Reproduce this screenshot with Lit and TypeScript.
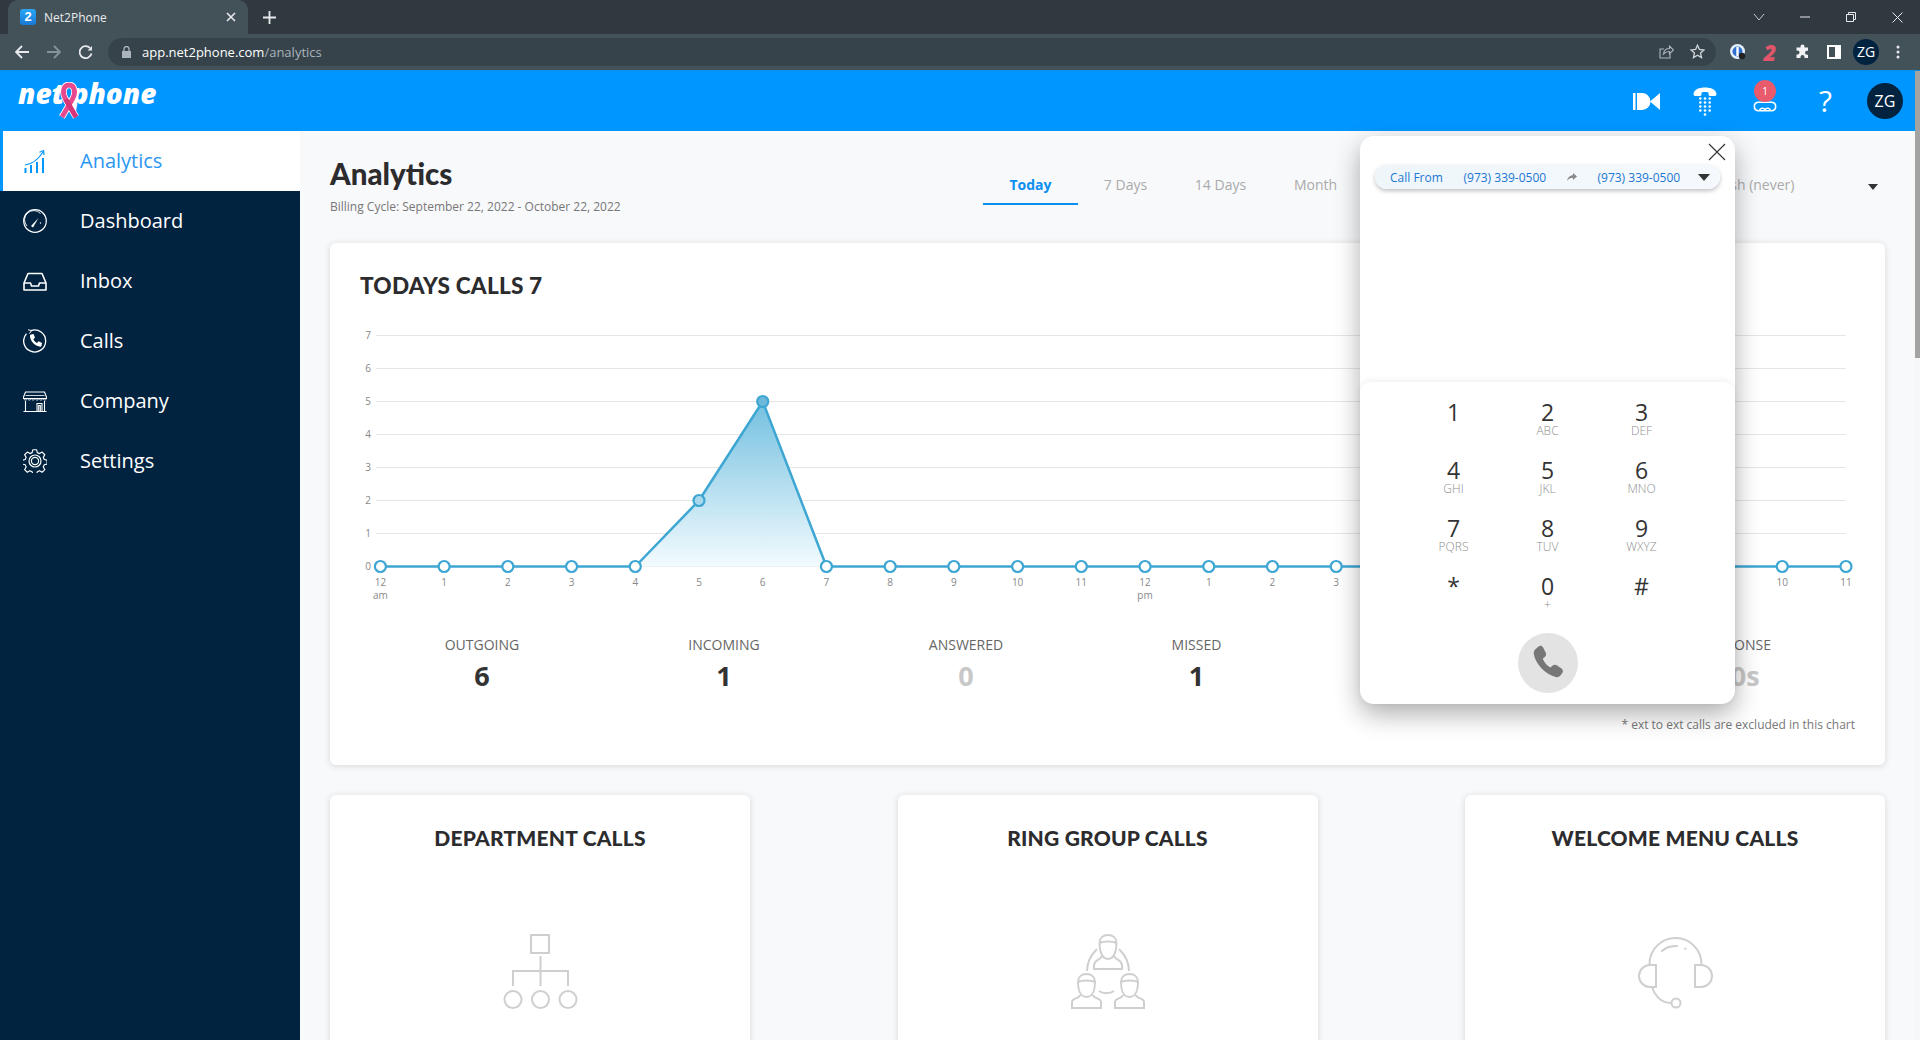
import { LitElement, html, css, svg } from "lit";
import { customElement } from "lit/decorators.js";

const BLUE = "#3ea6d3";
const yv = (v: number) => 266.5 - v * 33;
const xv = (i: number) => 50.4 + i * 63.72;
const VALUES: Record<number, number> = { 5: 2, 6: 5 };
const LABELS = ["12","1","2","3","4","5","6","7","8","9","10","11","12","1","2","3","4","5","6","7","8","9","10","11"];
const KEYS = [["1",""],["2","ABC"],["3","DEF"],["4","GHI"],["5","JKL"],["6","MNO"],["7","PQRS"],["8","TUV"],["9","WXYZ"],["*",""],["0","+"],["#",""]];
const STATS = [
  { l: "OUTGOING", v: "6", w: 242 },
  { l: "INCOMING", v: "1", w: 242 },
  { l: "ANSWERED", v: "0", w: 242, z: true },
  { l: "MISSED", v: "1", w: 219 },
];
const NAV = ["Analytics", "Dashboard", "Inbox", "Calls", "Company", "Settings"];

const NAV_ICONS: Record<string, unknown> = {
  Analytics: html`<svg viewBox="0 0 24 24" width="24" height="24" fill="none" stroke="#0096ff" stroke-width="1.6"><path d="M2.5 24v-5M8 24v-8M14 24v-11M20 24V9" stroke-width="2"/><path d="M2 16C9 15 15 11 20 3" stroke-width="1.2"/><path d="M16.5 3.2 20.6 1.5 21 6" stroke-width="1.2"/></svg>`,
  Dashboard: html`<svg viewBox="0 0 24 24" width="24" height="24" fill="none" stroke="#fff" stroke-width="1.2"><circle cx="12" cy="12" r="11.3"/><path d="M4 17A9 9 0 0 1 17.5 4.5" stroke-width=".9"/><path d="M8 17 15.5 9l-5.5 9.5z" fill="#fff" stroke="none"/><circle cx="17.5" cy="14" r=".7" fill="#fff" stroke="none"/></svg>`,
  Inbox: html`<svg viewBox="0 0 24 19" width="24" height="19" fill="none" stroke="#fff" stroke-width="1.6" stroke-linejoin="round"><path d="M1 11 5 1.5h14L23 11v7H1z"/><path d="M1 11h6.5l1 3h7l1-3H23"/></svg>`,
  Calls: html`<svg viewBox="0 0 24 24" width="24" height="24" fill="none" stroke="#fff" stroke-width="1.3"><path d="M8 1.6A11 11 0 1 1 3.5 4.6"/><path d="M5 .8 8.6 1.6 6.4 4.6" stroke-width="1"/><path d="M8 5.5 10.5 5l1.5 3.6-1.6 1.6c.8 1.7 2 2.9 3.6 3.7l1.6-1.6 3.4 1.6-.4 2.5c-.3 1-1.2 1.4-2.2 1.2C11.500 16.500 7.600 12.500 7 7.500 6.900 6.500 7.200 5.800 8 5.500z" fill="#fff" stroke="none"/></svg>`,
  Company: html`<svg viewBox="0 0 24 21" width="24" height="21" fill="none" stroke="#fff" stroke-width="1.1"><path d="M2.500 1h19L23.500 6v1.500H.5V6z"/><path d="M.5 7.500c1 2 3 2 4 0 1 2 3 2 3.800 0 1 2 3 2 3.800 0 1 2 3 2 3.800 0 1 2 3 2 3.800 0 1 2 3 2 4 0" stroke-width=".9"/><path d="M2.500 10v10M21.500 10v10M.5 20.500h23"/><path d="M14 12.500h5v8h-5zM15.700 14.500h1.600v6h-1.600z"/><path d="M2.500 4.500h19" stroke-width=".8"/></svg>`,
  Settings: html`<svg viewBox="0 0 24 24" width="24" height="24" fill="none" stroke="#fff" stroke-width="1.2" stroke-linejoin="round"><path d="M10 .8h4l.7 3 2.300 1 2.700-1.600 2.800 2.800-1.600 2.700 1 2.300 3 .7v.6 3.400l-3 .7-1 2.300 1.600 2.700-2.800 2.800-2.700-1.600-2.300 1-.7 3h-4l-.7-3-2.300-1-2.700 1.600-2.800-2.800 1.600-2.700-1-2.300-3-.7v-4l3-.7 1-2.300L1.500 6l2.800-2.800L7 4.800l2.300-1z" transform="translate(.2 0) scale(.96)"/><circle cx="12" cy="12" r="6"/><circle cx="12" cy="12" r="3.600"/></svg>`,
};

@customElement("app-root")
export class AppRoot extends LitElement {
  static styles = css`
    :host { display: block; position: relative; width: 1920px; height: 1040px; overflow: hidden; background: #f8f9fb; font-family: "Open Sans", "Liberation Sans", sans-serif; color: #333; }
    * { box-sizing: border-box; }
    svg { display: block; flex: none; }

    .tabstrip { height: 34px; background: #2f393f; display: flex; align-items: flex-end; padding-left: 8px; color: #e8eaed; }
    .tab { width: 240px; height: 34px; background: #435259; border-radius: 10px 10px 0 0; display: flex; align-items: center; padding: 0 12px; font-size: 12px; gap: 8px; }
    .fav { width: 16px; height: 16px; border-radius: 3px; background: linear-gradient(#2aa6f5, #1779d8); color: #fff; font: 700 13px/16px "Liberation Sans", sans-serif; text-align: center; }
    .tab .title { flex: 1; }
    .plus { margin-left: 15px; margin-bottom: 10px; }
    .winctl { margin-left: auto; display: flex; align-items: center; height: 34px; }
    .winctl div { width: 46px; display: flex; justify-content: center; }

    .toolbar { height: 37px; background: #435259; border-bottom: 1px solid #0e8fe6; display: flex; align-items: center; padding: 0 0 1px 15px; }
    .nav-arrows { display: flex; gap: 18px; width: 93px; }
    .omni { width: 1608px; height: 28px; border-radius: 14px; background: #36434b; display: flex; align-items: center; padding: 0 11px 0 14px; font-size: 13px; color: #fff; }
    .omni .lock { margin-right: 11px; }
    .omni .dim { color: #a9b4ba; }
    .omni .acts { margin-left: auto; display: flex; gap: 16px; align-items: center; }
    .exts { display: flex; align-items: center; margin-left: 6px; width: 192px; }
    .ext { width: 32px; display: flex; justify-content: center; align-items: center; }
    .red2 { font: italic 800 22px/24px "Open Sans", sans-serif; color: #e2566b; }
    .mini-av { width: 26px; height: 26px; border-radius: 50%; background: #012340; color: #fff; font-size: 14px; line-height: 26px; text-align: center; }

    .frame { display: flex; height: 969px; }
    .page { flex: 1; min-width: 0; display: flex; flex-direction: column; }
    .scroll { width: 5px; background: #f6f7f9; }
    .thumb { height: 287px; background: #a3a3a3; }

    .topbar { height: 60px; flex: none; background: #0096ff; display: flex; align-items: center; color: #fff; }
    .logo { display: flex; align-items: flex-start; align-self: flex-start; padding: 4px 0 0 18px; font: italic 800 28px/36px "Open Sans", sans-serif; }
    .logo svg { position: relative; margin: 7px -10px 0 -7px; }
    .top-icons { margin-left: auto; display: flex; align-items: center; }
    .ticon { width: 61px; height: 60px; display: flex; align-items: center; justify-content: center; position: relative; }
    .ticon.video svg { margin-left: 8px; }
    .ticon.dial svg { margin-left: 2px; }
    .badge { position: absolute; left: 20px; top: 9px; width: 22px; height: 22px; border-radius: 50%; background: #e85a6c; font-size: 10px; line-height: 22px; text-align: center; color: #fff; }
    .q { font-size: 30px; line-height: 30px; font-weight: 400; }
    .avatar { width: 36px; height: 36px; border-radius: 50%; background: #012340; font-size: 16px; line-height: 36px; text-align: center; margin: 0 12px 0 11px; }

    .body { flex: 1; display: flex; min-height: 0; }
    .side { width: 300px; flex: none; background: #012340; }
    .item { height: 60px; display: flex; align-items: center; color: #fff; font-size: 20px; padding-left: 23px; }
    .item .label { margin-top: -2px; }
    .item .ic { width: 57px; display: flex; }
    .item.active { background: #fff; color: #2b97f2; border-left: 3px solid #0096ff; padding-left: 20px; }

    .main { flex: 1; min-width: 0; padding: 0 30px; overflow: hidden; }
    .head { height: 112px; display: flex; }
    .heading { width: 653px; padding-top: 26px; }
    h1 { margin: 0; font: 900 29.5px/34px "Lato", sans-serif; color: #2c2c2e; }
    .billing { margin-top: 8px; font-size: 12px; line-height: 16px; color: #777; }
    .tabs { display: flex; margin-top: 36px; height: 38px; }
    .t { width: 95px; text-align: center; font-size: 14px; line-height: 20px; padding: 8px 0; color: #aaa; border-bottom: 2px solid transparent; }
    .t.on { color: #0a8ef0; font-weight: 700; border-color: #0a8ef0; }
    .refresh { margin-left: auto; width: 245px; margin-top: 44px; padding-left: 23px; display: flex; justify-content: space-between; font-size: 14px; line-height: 20px; color: #aaa; }
    .caret { width: 0; height: 0; border-left: 5px solid transparent; border-right: 5px solid transparent; border-top: 6px solid #333; margin: 9px 7px 0 0; }

    .card { background: #fff; border-radius: 6px; box-shadow: 0 1px 7px rgba(0,0,0,.14); }
    .today { height: 522px; padding-top: 30px; }
    h2 { margin: 0; font: 900 21px/26px "Lato", sans-serif; color: #2c2c2e; letter-spacing: .2px; }
    .today h2 { padding-left: 30px; font-size: 22.6px; }
    .today .plot { margin-top: 1px; }
    .chart-t { font: 10px "Open Sans", sans-serif; fill: #888; }
    .stats { display: flex; margin-top: 31px; padding-left: 31px; }
    .stat { text-align: center; flex: none; }
    .stat .l { font-size: 14px; line-height: 20px; color: #666; }
    .stat .v { margin-top: 3px; font-size: 27px; line-height: 36px; font-weight: 700; color: #333; }
    .stat .v.z { color: #c8c8c8; }
    .stat.last { margin-left: auto; margin-right: 114px; }
    .note { margin-top: 23px; padding-right: 30px; text-align: right; font-size: 12px; line-height: 16px; color: #777; }

    .row { display: flex; justify-content: space-between; margin-top: 30px; }
    .small { width: 420px; height: 320px; padding-top: 30px; text-align: center; }
    .small svg { margin: 78px auto 0; }

    .dialer { position: absolute; left: 1360px; top: 136px; width: 375px; height: 568px; background: #fff; border-radius: 14px; box-shadow: 0 10px 26px rgba(0,0,0,.32); display: flex; flex-direction: column; }
    .close { position: absolute; right: 9px; top: 7px; }
    .pill { margin: 29px 15px 0; height: 24px; border-radius: 12px; background: linear-gradient(90deg, #eef6fb, #f5f9fd); box-shadow: 0 2px 4px rgba(0,0,0,.25); display: flex; align-items: center; padding: 0 10px 0 15px; font-size: 12px; color: #1c76d2; }
    .pill .from { width: 73.500px; }
    .pill .num { width: 83px; }
    .pill .fwd { width: 51px; display: flex; justify-content: center; }
    .pill .tri { margin-left: auto; width: 0; height: 0; border-left: 6px solid transparent; border-right: 6px solid transparent; border-top: 7px solid #333; }
    .pad { margin-top: auto; height: 322px; border-radius: 12px; box-shadow: 0 -2px 6px rgba(0,0,0,.06); padding-top: 19px; }
    .keys { display: grid; grid-template-columns: repeat(3, 94px); grid-auto-rows: 58px; justify-content: center; }
    .key { text-align: center; }
    .key .d { font-size: 23px; line-height: 23px; color: #333; }
    .key .a { font-size: 12px; line-height: 14px; color: #8f8f8f; font-weight: 300; }
    .call { width: 60px; height: 60px; margin: 0 auto; border-radius: 50%; background: #e3e3e3; display: flex; align-items: center; justify-content: center; }
  `;

  private chart() {
    const pts = LABELS.map((_, i) => ({ x: xv(i), y: yv(VALUES[i] ?? 0), i }));
    return html`<svg class="plot" width="1555" height="304" viewBox="0 0 1555 304">
      <defs><linearGradient id="area" x1="0" y1="0" x2="0" y2="1"><stop offset="0" stop-color="#74c0e0"/><stop offset="1" stop-color="#f2fbfe"/></linearGradient></defs>
      ${[0,1,2,3,4,5,6,7].map(v => svg`
        <line x1="46" x2="1516" y1=${yv(v)} y2=${yv(v)} stroke="#e6e6e6" stroke-width="1"/>
        <text class="chart-t" x="38" y=${yv(v) + 3.500} text-anchor="middle">${v}</text>`)}
      <polygon points="${xv(4)},${yv(0)} ${xv(5)},${yv(2)} ${xv(6)},${yv(5)} ${xv(7)},${yv(0)}" fill="url(#area)"/>
      <polyline points=${pts.map(p => `${p.x},${p.y}`).join(" ")} fill="none" stroke=${BLUE} stroke-width="2.500" stroke-linejoin="round"/>
      ${pts.map(p => svg`<circle cx=${p.x} cy=${p.y} r="5.500" stroke=${BLUE} stroke-width="2.200" fill=${p.i === 6 ? "#6db9dc" : p.i === 5 ? "#a9d8ec" : "#fff"}/>`)}
      ${LABELS.map((l, i) => svg`<text class="chart-t" x=${xv(i)} y="285.500" text-anchor="middle">${l}</text>`)}
      <text class="chart-t" x=${xv(0)} y="298.500" text-anchor="middle">am</text>
      <text class="chart-t" x=${xv(12)} y="298.500" text-anchor="middle">pm</text>
    </svg>`;
  }

  render() {
    return html`
      <div class="tabstrip">
        <div class="tab">
          <div class="fav">2</div><div class="title">Net2Phone</div>
          <svg width="10" height="10" viewBox="0 0 10 10" stroke="#e8eaed" stroke-width="1.600"><path d="M1 1l8 8M9 1l-8 8"/></svg>
        </div>
        <svg class="plus" width="13" height="13" viewBox="0 0 13 13" stroke="#e8eaed" stroke-width="1.800"><path d="M6.500 0v13M0 6.500h13"/></svg>
        <div class="winctl">
          <div><svg width="12" height="8" viewBox="0 0 12 8" fill="none" stroke="#c4c9cc"><path d="M1 1l5 6 5-6"/></svg></div>
          <div><svg width="10" height="2" viewBox="0 0 10 2"><path d="M0 1h10" stroke="#e8eaed"/></svg></div>
          <div><svg width="10" height="10" viewBox="0 0 10 10" fill="none" stroke="#e8eaed"><path d="M.5 2.500h7v7h-7zM2.500 2.500v-2h7v7h-2"/></svg></div>
          <div><svg width="11" height="11" viewBox="0 0 11 11" stroke="#e8eaed"><path d="M.5.500l10 10M10.500.500l-10 10"/></svg></div>
        </div>
      </div>
      <div class="toolbar">
        <div class="nav-arrows">
          <svg width="14" height="14" viewBox="0 0 14 14" fill="none" stroke="#e8eaed" stroke-width="1.800"><path d="M14 7H1.500M7 1 1 7l6 6"/></svg>
          <svg width="14" height="14" viewBox="0 0 14 14" fill="none" stroke="#84929a" stroke-width="1.800"><path d="M0 7h12.500M7 1l6 6-6 6"/></svg>
          <svg width="14" height="14" viewBox="0 0 14 14" fill="none" stroke="#e8eaed" stroke-width="1.800"><path d="M12.500 8.500A6 6 0 1 1 11 3"/><path d="M13 1v4.500H8.500z" fill="#e8eaed" stroke="none"/></svg>
        </div>
        <div class="omni">
          <svg class="lock" width="9" height="12" viewBox="0 0 9 12"><path d="M0 5h9v7H0z" fill="#aab4ba"/><path d="M2 5V3a2.500 2.500 0 0 1 5 0v2" fill="none" stroke="#aab4ba" stroke-width="1.300"/></svg>
          <span>app.net2phone.com<span class="dim">/analytics</span></span>
          <div class="acts">
            <svg width="15" height="15" viewBox="0 0 15 15" fill="none" stroke="#aeb6bb" stroke-width="1.100"><path d="M5 5H1v9h10v-4"/><path d="M4.500 10c.5-4 3.500-5.500 6-5.500V2L14.500 6l-4 4V7.500C8 7.500 6 8.500 4.500 10z"/></svg>
            <svg width="15" height="15" viewBox="0 0 15 15" fill="none" stroke="#d0d5d8" stroke-width="1.300"><path d="M7.500 1.200 9.400 5.500l4.600.5-3.500 3 1 4.600-4-2.400-4 2.400 1-4.600L1 6l4.600-.5z"/></svg>
          </div>
        </div>
        <div class="exts">
          <div class="ext"><svg width="16" height="16" viewBox="0 0 16 16"><circle cx="7.500" cy="7.500" r="7.500" fill="#e8f1fb"/><circle cx="7.500" cy="7.500" r="5" fill="#2e6fd0"/><rect x="6.300" y="3" width="2.400" height="9" fill="#fff"/><circle cx="12" cy="12" r="3.200" fill="#222"/></svg></div>
          <div class="ext red2">2</div>
          <div class="ext"><svg width="15" height="15" viewBox="0 0 15 15" fill="#f1f3f4"><path d="M5.500 2.500a2 2 0 0 1 4 0V3.500H13v3.300h-1a2 2 0 0 0 0 4h1V14H9.500v-1a2 2 0 0 0-4 0v1H1.500v-3.500h1a2 2 0 0 0 0-4h-1V3.500h4z"/></svg></div>
          <div class="ext"><svg width="14" height="14" viewBox="0 0 14 14"><path d="M0 0h14v14H0z" fill="#fff"/><path d="M2 2h6v10H2z" fill="#435259"/></svg></div>
          <div class="ext"><div class="mini-av">ZG</div></div>
          <div class="ext"><svg width="4" height="14" viewBox="0 0 4 14" fill="#e8eaed"><circle cx="2" cy="2" r="1.500"/><circle cx="2" cy="7" r="1.500"/><circle cx="2" cy="12" r="1.500"/></svg></div>
        </div>
      </div>

      <div class="frame">
        <div class="page">
          <header class="topbar">
            <div class="logo">
              <span>net</span>
              <svg width="24" height="38" viewBox="0 0 24 38" fill="none"><path d="M5 35 15.500 17C19 11 18 3 12 3S5 11 8.500 17L19 35" stroke="#fff" stroke-width="6.500"/><path d="M5 35 15.500 17C19 11 18 3 12 3S5 11 8.500 17L19 35" stroke="#e8488d" stroke-width="4.800"/><path d="M8.500 17 19 35" stroke="#d43679" stroke-width="4.800"/></svg>
              <span>phone</span>
            </div>
            <div class="top-icons">
              <div class="ticon video"><svg width="27" height="17" viewBox="0 0 27 17" fill="#fff"><path d="M0 0h2.500v17H0zM4 0h5a8.500 8.500 0 0 1 0 17H4z"/><path d="M17 8.500 27 0v17z"/></svg></div>
              <div class="ticon dial"><svg width="24" height="29" viewBox="0 0 24 29" fill="#fff"><path d="M.5 7C1 2.500 6 .500 12 .500S23 2.500 23.500 7c0 1-.5 2-2 2H17c-1 0-1.500-.8-1.500-2V5.500c-2-.6-5-.6-7 0V7C8.500 8.200 8 9 7 9H2.500C1 9 .5 8 .5 7z"/>${[0,1,2,3].map(r => [0,1,2].map(c => svg`<circle cx=${7.300 + c * 4.700} cy=${11.500 + r * 4} r="1.300"/>`))}<circle cx="12" cy="27.500" r="1.300"/></svg></div>
              <div class="ticon"><svg style="margin-top:10px" width="24" height="11" viewBox="0 0 24 11" fill="none" stroke="#fff" stroke-width="1.600"><path d="M6 9.700H5A4.300 4.300 0 0 1 5 1.200h14a4.300 4.300 0 0 1 0 8.500h-1M6 9.700h12M6.500 9.700a3 3 0 0 1 5.500-1 3 3 0 0 1 5.500 1"/></svg><div class="badge">1</div></div>
              <div class="ticon q">?</div>
              <div class="avatar">ZG</div>
            </div>
          </header>
          <div class="body">
            <nav class="side">
              ${NAV.map((n, i) => html`<div class="item ${i === 0 ? "active" : ""}"><span class="ic">${NAV_ICONS[n]}</span><span class="label">${n}</span></div>`)}
            </nav>
            <main class="main">
              <div class="head">
                <div class="heading">
                  <h1>Analytics</h1>
                  <div class="billing">Billing Cycle: September 22, 2022 - October 22, 2022</div>
                </div>
                <div class="tabs">
                  <div class="t on">Today</div><div class="t">7 Days</div><div class="t">14 Days</div><div class="t">Month</div>
                </div>
                <div class="refresh"><span>Auto-refresh (never)</span><span class="caret"></span></div>
              </div>

              <section class="card today">
                <h2>TODAYS CALLS 7</h2>
                ${this.chart()}
                <div class="stats">
                  ${STATS.map(s => html`<div class="stat" style="width:${s.w}px"><div class="l">${s.l}</div><div class="v ${s.z ? "z" : ""}">${s.v}</div></div>`)}
                  <div class="stat last"><div class="l">AVG RESPONSE</div><div class="v z">0m 0s</div></div>
                </div>
                <div class="note">* ext to ext calls are excluded in this chart</div>
              </section>

              <div class="row">
                <section class="card small">
                  <h2>DEPARTMENT CALLS</h2>
                  <svg width="80" height="80" viewBox="0 0 80 80" fill="none" stroke="#cfcfcf" stroke-width="2"><rect x="31" y="6" width="18" height="18"/><path d="M40.500 27v30M13 57V42h55v15"/><circle cx="13" cy="70.500" r="8.500"/><circle cx="40.500" cy="70.500" r="8.500"/><circle cx="68" cy="70.500" r="8.500"/></svg>
                </section>
                <section class="card small">
                  <h2>RING GROUP CALLS</h2>
                  <svg width="80" height="80" viewBox="0 0 80 80" fill="none" stroke="#cfcfcf" stroke-width="2"><path d="M31.500 14C31.500 9 35 6 40 6s8.500 3 8.500 8c0 7-2 16-8.500 16s-8.500-9-8.500-16zM31.500 14c4-2 13-2 17 0"/><path d="M34 27c-1 4-8 3-8 10v3h28v-3c0-7-7-6-8-10"/><path d="M29 20C22 27 19 34 19 42M51 20c7 7 10 14 10 22"/><path d="M31 62c4 3 11 3 15 0"/><path d="M10 53c0-5 3.500-8 8.500-8s8.500 3 8.500 8c0 7-2 15-8.500 15S10 60 10 53zM10 53c4-2 13-2 17 0M12 66c-1 4-8 3-8 7v6h29v-6c0-4-7-3-8-7"/><path d="M53 53c0-5 3.500-8 8.500-8s8.500 3 8.500 8c0 7-2 15-8.500 15S53 60 53 53zM53 53c4-2 13-2 17 0M55 66c-1 4-8 3-8 7v6h29v-6c0-4-7-3-8-7"/></svg>
                </section>
                <section class="card small">
                  <h2>WELCOME MENU CALLS</h2>
                  <svg width="80" height="80" viewBox="0 0 80 80" fill="none" stroke="#cfcfcf" stroke-width="2" stroke-linecap="round" stroke-linejoin="round"><path d="M14.500 36V35a26 26 0 0 1 52 0v1"/><path d="M21 36h-6a11 11 0 0 0 0 22h6zM60 36h6a11 11 0 0 1 0 22h-6z"/><path d="M17 58c2 7 8 16 19 16"/><circle cx="41" cy="74" r="4.500"/><path d="M27 22c4-4 9-5 15-5M50 19.500l.5.300"/></svg>
                </section>
              </div>
            </main>
          </div>
        </div>
        <div class="scroll"><div class="thumb"></div></div>
      </div>

      <aside class="dialer">
        <svg class="close" width="18" height="18" viewBox="0 0 18 18" stroke="#333" stroke-width="1.100"><path d="M1 1l16 16M17 1 1 17"/></svg>
        <div class="pill">
          <span class="from">Call From</span>
          <span class="num">(973) 339-0500</span>
          <span class="fwd"><svg width="10" height="8" viewBox="0 0 10 8" fill="#8a8a8a"><path d="M6 0l4 3.500L6 7V5C3.500 5 1.500 5.500 0 8c.4-3.500 2.500-5.500 6-6z"/></svg></span>
          <span class="num">(973) 339-0500</span>
          <span class="tri"></span>
        </div>
        <div class="pad">
          <div class="keys">
            ${KEYS.map(([d, a]) => html`<div class="key"><div class="d">${d}</div><div class="a">${a}</div></div>`)}
          </div>
          <div class="call"><svg width="42" height="42" viewBox="0 0 24 24" fill="#777"><path d="M6.600 2.500c1-.6 2.100-.3 2.600.6l1.500 3c.4.800.2 1.700-.4 2.300l-1.300 1.200c.8 2 2.300 3.800 4.300 4.900l1.400-1.100c.7-.5 1.600-.6 2.300-.1l2.700 1.800c.9.600 1.100 1.800.4 2.700l-.9 1.200c-.7.900-1.800 1.300-2.900 1C10.200 18.200 4.800 12.400 3.900 6.800c-.2-1.100.3-2.200 1.200-2.900z"/></svg></div>
        </div>
      </aside>
    `;
  }
}
